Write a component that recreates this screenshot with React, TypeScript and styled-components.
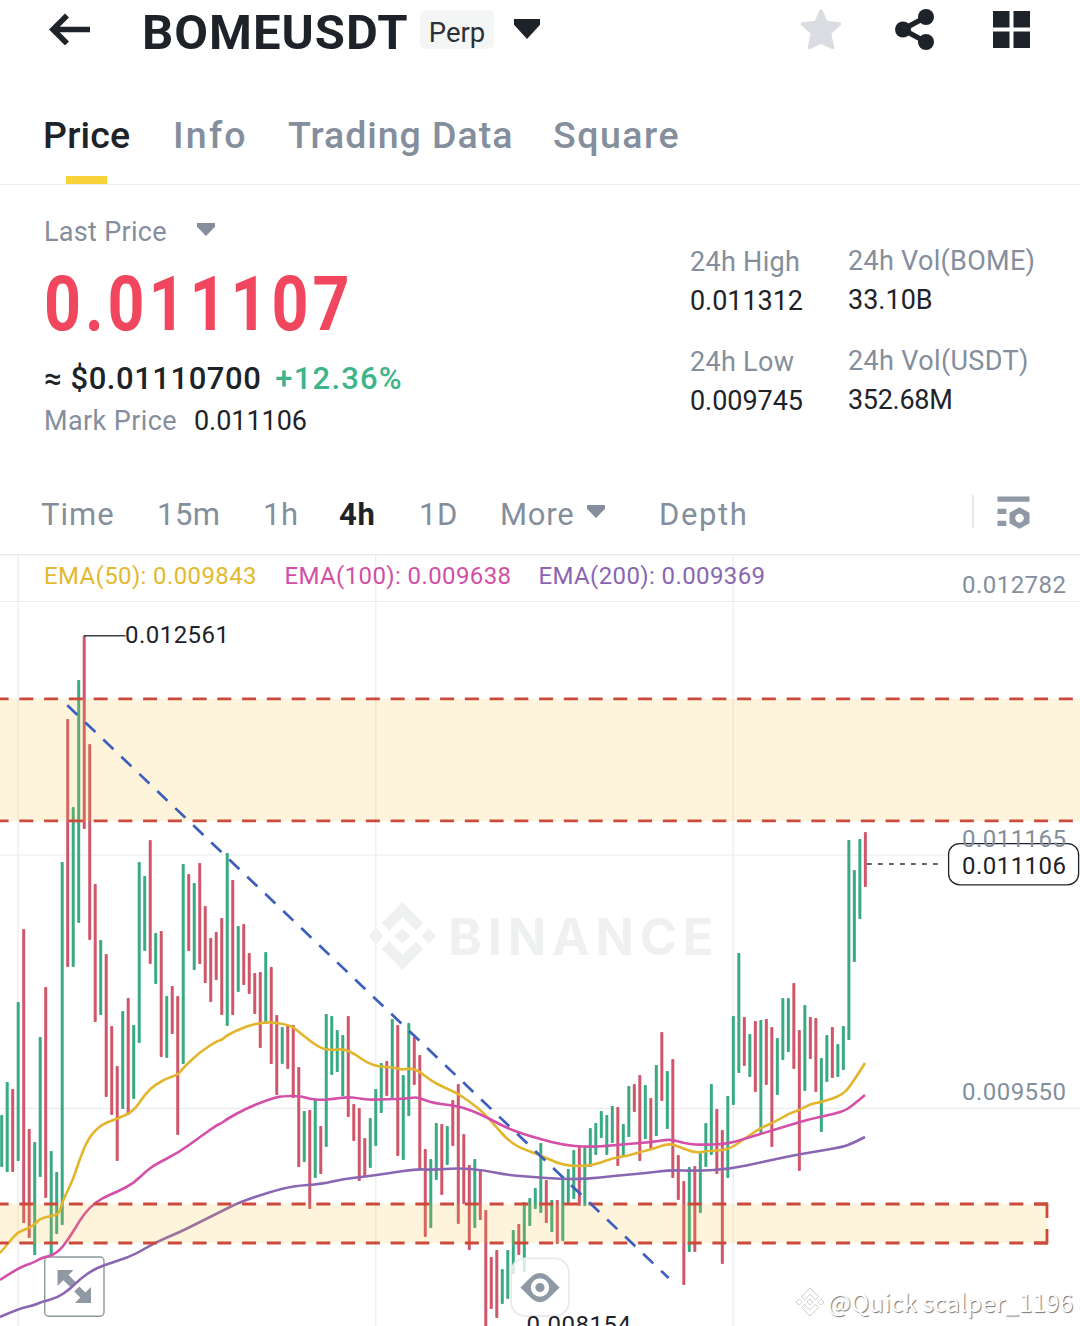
import React from "react";
import styled, { createGlobalStyle, css } from "styled-components";

const ink = "#1e2329";
const muted = "#848e9c";
const up = "#3aaa82";
const down = "#d0566a";

const GlobalStyle = createGlobalStyle`
  * { box-sizing: border-box; }
  body { margin: 0; background: #fff; overflow: hidden; }
`;

const Screen = styled.main`
  position: relative;
  display: flex;
  flex-direction: column;
  width: 1080px;
  height: 1326px;
  overflow: hidden;
  background: #fff;
  color: ${ink};
  font-family: Roboto, "Liberation Sans", sans-serif;
  white-space: nowrap;
`;

/* ---------- header ---------- */

const Header = styled.header`
  display: flex;
  align-items: flex-start;
  height: 64px;
  padding: 0 49px;
`;

const BackIcon = styled.svg`
  display: block;
  width: 42px;
  height: 32px;
  margin: 13px 51px 0 0;
`;

const Title = styled.h1`
  margin: 0;
  width: 278px;
  font-size: 49px;
  font-weight: 700;
  line-height: 65px;
  letter-spacing: 1px;
`;

const Badge = styled.span`
  width: 74px;
  height: 39px;
  margin-top: 10px;
  padding-top: 6px;
  border-radius: 6px;
  background: #f4f5f5;
  color: #2b3139;
  font-size: 27.5px;
  line-height: 33px;
  text-align: center;
`;

const Caret = styled.svg<{ $left: number; $top?: number }>`
  display: block;
  margin-left: ${(p) => p.$left}px;
  margin-top: ${(p) => p.$top ?? 0}px;
`;

const Actions = styled.div`
  display: grid;
  grid-template-columns: 94px 98px 39px;
  margin: 8px 0 0 auto;
`;

/* ---------- tabs ---------- */

const Tabs = styled.nav`
  display: grid;
  grid-template-columns: 130px 115px 265px 200px;
  height: 121px;
  padding: 48px 0 0 43px;
  border-bottom: 1px solid #e9ebed;
`;

const Tab = styled.div<{ $active?: boolean; $spacing: number }>`
  display: flex;
  flex-direction: column;
  align-items: center;
  justify-content: space-between;
  justify-self: start;
  font-size: 37.5px;
  font-weight: 500;
  line-height: 46px;
  letter-spacing: ${(p) => p.$spacing}px;
  color: ${(p) => (p.$active ? ink : muted)};
  &::after {
    content: "";
    width: 41px;
    height: 8px;
    background: ${(p) => (p.$active ? "#f8d33a" : "transparent")};
  }
`;

/* ---------- summary ---------- */

const Summary = styled.section`
  display: flex;
  height: 289px;
  padding: 29px 0 0 44px;
`;

const Quote = styled.div`
  width: 646px;
`;

const QuoteLine = styled.div<{ $gap?: number }>`
  display: flex;
  align-items: center;
  height: 36px;
  margin-top: ${(p) => p.$gap ?? 0}px;
  line-height: 36px;
`;

const text = css<{ $size: number; $spacing?: number; $color?: string; $weight?: number; $left?: number }>`
  font-size: ${(p) => p.$size}px;
  letter-spacing: ${(p) => p.$spacing ?? 0}px;
  color: ${(p) => p.$color ?? ink};
  font-weight: ${(p) => p.$weight ?? 400};
  margin-left: ${(p) => p.$left ?? 0}px;
`;

const Text = styled.span`
  ${text}
`;

/* condensed figures for the headline price */
const LastPrice = styled.div`
  width: max-content;
  margin-top: 15px;
  color: #f1475e;
  font-size: 76px;
  font-weight: 700;
  line-height: 78px;
  letter-spacing: 4.6px;
  transform: scaleX(0.85);
  transform-origin: left center;
`;

const StatColumn = styled.dl<{ $width: number; $lift?: number }>`
  display: flex;
  flex-direction: column;
  gap: 22px;
  width: ${(p) => p.$width}px;
  margin: ${(p) => 29 - (p.$lift ?? 0)}px 0 0;
`;

const Stat = styled.div`
  line-height: 39px;
`;

const StatLabel = styled.dt<{ $spacing: number }>`
  color: ${muted};
  font-size: 27px;
  letter-spacing: ${(p) => p.$spacing}px;
`;

const StatValue = styled.dd<{ $spacing: number }>`
  margin: 0;
  font-size: 27px;
  letter-spacing: ${(p) => p.$spacing}px;
`;

/* ---------- intervals ---------- */

const Intervals = styled.nav`
  display: grid;
  grid-template-columns: 116px 106px 76px 80px 81px 159px 313px 25px auto;
  align-items: center;
  height: 80px;
  padding: 1px 0 0 41px;
`;

const Interval = styled.span<{ $active?: boolean; $spacing: number }>`
  display: flex;
  align-items: center;
  font-size: 31px;
  line-height: 40px;
  letter-spacing: ${(p) => p.$spacing}px;
  font-weight: ${(p) => (p.$active ? 700 : 400)};
  color: ${(p) => (p.$active ? ink : muted)};
`;

const Divider = styled.i`
  width: 2px;
  height: 33px;
  margin-top: -6px;
  background: #e6e8ea;
`;

const SettingsIcon = styled.svg`
  display: block;
  width: 33px;
  height: 33px;
  margin-top: -5px;
`;

/* ---------- chart ---------- */

const Chart = styled.svg`
  display: block;
  flex: none;
  width: 1080px;
  height: 772px;
  font-family: Roboto, "Liberation Sans", sans-serif;
  font-size: 24px;
`;

const Signature = styled.div`
  position: absolute;
  right: 7px;
  bottom: 6px;
  display: flex;
  align-items: center;
  gap: 4px;
  color: #fff;
  font-family: "Noto Sans CJK SC", sans-serif;
  font-size: 24.3px;
  line-height: 36px;
  letter-spacing: 0.1px;
  text-shadow: 1px 1px 1px rgba(60, 60, 60, 0.7);
  svg {
    filter: drop-shadow(0.8px 0.9px 0.4px rgba(40, 40, 40, 0.95));
  }
`;

type Candle = [string, number, number];

/* colour, high and low of each bar, left to right */
const candles: Candle[] = [
  ["g", 1115, 1167], ["g", 1082, 1172], ["r", 1089, 1172], ["g", 1002, 1161], ["r", 929, 1223],
  ["r", 1129, 1238], ["g", 1142, 1255], ["g", 1037, 1177], ["r", 987, 1198], ["g", 1151, 1255],
  ["g", 1172, 1234], ["g", 862, 1225], ["r", 719, 967], ["g", 807, 967], ["g", 680, 923],
  ["r", 635.5, 829], ["r", 744, 940], ["r", 884, 1022], ["g", 940, 1015], ["r", 954, 1097],
  ["r", 1026, 1115], ["r", 1066, 1161], ["g", 1011, 1109], ["r", 998, 1115], ["g", 1025, 1099],
  ["g", 862, 1043], ["g", 876, 951], ["r", 840, 964], ["g", 933, 984], ["r", 931, 1057],
  ["g", 996, 1058], ["r", 986, 1034], ["r", 996, 1135], ["g", 864, 1064], ["r", 874, 951],
  ["g", 883, 970], ["r", 863, 964], ["r", 906, 983], ["r", 938, 1002], ["r", 932, 980],
  ["r", 918, 1015], ["g", 853, 1026], ["r", 880, 1015], ["g", 926, 992], ["r", 924, 985],
  ["r", 953, 994], ["r", 973, 1014], ["r", 972, 1048], ["g", 952, 1024], ["r", 967, 1064],
  ["r", 1015, 1095], ["g", 1027, 1064], ["r", 1025, 1069], ["r", 1025, 1098], ["r", 1067, 1167],
  ["g", 1111, 1162], ["r", 1110, 1209], ["g", 1099, 1178], ["r", 1126, 1174], ["g", 1014, 1147],
  ["g", 1016, 1075], ["g", 1030, 1072], ["g", 1035, 1096], ["r", 1016, 1117], ["r", 1104, 1141],
  ["r", 1108, 1181], ["r", 1138, 1177], ["g", 1118, 1168], ["g", 1089, 1146], ["g", 1063, 1113],
  ["r", 1061, 1096], ["g", 1019, 1098], ["r", 1025, 1156], ["g", 1075, 1160], ["g", 1023, 1116],
  ["r", 1037, 1085], ["r", 1055, 1169], ["r", 1149, 1237], ["g", 1159, 1228], ["g", 1123, 1180],
  ["r", 1124, 1195], ["g", 1126, 1165], ["r", 1100, 1146], ["r", 1084, 1224], ["r", 1134, 1204],
  ["r", 1165, 1250], ["g", 1159, 1228], ["r", 1169, 1220], ["r", 1210, 1330], ["r", 1257, 1309],
  ["r", 1250, 1318], ["g", 1269, 1304], ["g", 1250, 1299], ["g", 1230, 1274], ["r", 1224, 1255],
  ["g", 1202, 1272], ["g", 1198, 1226], ["g", 1188, 1209], ["g", 1143, 1213], ["r", 1180, 1223],
  ["g", 1200, 1232], ["r", 1200, 1244], ["g", 1176, 1241], ["g", 1169, 1203], ["g", 1150, 1199],
  ["r", 1147, 1206], ["g", 1147, 1206], ["g", 1128, 1167], ["g", 1123, 1155], ["g", 1111, 1138],
  ["g", 1115, 1155], ["g", 1106, 1143], ["r", 1107, 1166], ["g", 1124, 1157], ["g", 1086, 1137],
  ["r", 1084, 1112], ["r", 1075, 1161], ["g", 1085, 1139], ["r", 1098, 1149], ["g", 1065, 1136],
  ["r", 1032, 1101], ["g", 1071, 1129], ["r", 1059, 1178], ["r", 1155, 1200], ["r", 1181, 1285],
  ["g", 1167, 1252], ["r", 1166, 1252], ["g", 1153, 1213], ["g", 1123, 1167], ["g", 1084, 1155],
  ["r", 1109, 1174], ["r", 1130, 1264], ["g", 1096, 1178], ["g", 1016, 1105], ["g", 953, 1073],
  ["r", 1017, 1066], ["g", 1034, 1077], ["r", 1021, 1092], ["g", 1020, 1133], ["r", 1019, 1085],
  ["r", 1027, 1147], ["g", 1038, 1095], ["g", 998, 1060], ["g", 998, 1052], ["r", 983, 1069],
  ["r", 1030, 1171], ["g", 1005, 1091], ["r", 1017, 1059], ["r", 1018, 1092], ["g", 1058, 1132],
  ["g", 1035, 1082], ["r", 1027, 1078], ["g", 1044, 1077], ["g", 1026, 1070], ["g", 840, 1040],
  ["g", 870, 962], ["g", 839, 919], ["r", 832, 887],
];

const ema50 =
  "0,1253 10,1241 18,1232 29,1228 35,1224 41,1218 57,1215 60,1211 63,1200 73,1180 80,1158 89,1137 102,1124 117,1119 134,1111 145,1094 156,1084 170,1077 178,1075 183,1068 200,1052 217,1041 222,1040 227,1035 247,1026 260,1023 270,1022 290,1025 298,1031 310,1041 322,1049 333,1050 344,1049 355,1054 367,1063 380,1067 392,1067 403,1070 410,1068 419,1071 430,1080 443,1087 457,1093 470,1102 483,1112 497,1128 508,1140 520,1148 540,1155 557,1163 570,1166 587,1166 600,1163 613,1158 627,1156 640,1152 653,1149 669,1143 682,1148 696,1153 707,1151 728,1150 743,1140 760,1128 773,1123 790,1113 800,1110 810,1104 822,1102 843,1095 853,1082 865,1063";
const ema100 =
  "0,1280 18,1268 35,1262 41,1258 57,1254 70,1237 80,1220 89,1208 102,1198 117,1192 134,1183 145,1172 156,1164 178,1153 200,1137 217,1125 222,1123 227,1119 247,1108 270,1099 282,1096 300,1096 310,1099 322,1100 333,1099 347,1097 357,1098 370,1100 387,1099 403,1099 416,1097 422,1099 433,1103 457,1106 473,1111 490,1119 505,1127 520,1133 540,1139 563,1145 587,1147 607,1146 627,1144 653,1142 670,1139 683,1143 697,1145 728,1144 747,1138 767,1132 790,1125 810,1119 843,1112 853,1105 865,1095";
const ema200 =
  "0,1317 18,1309 35,1305 41,1302 57,1298 70,1289 80,1279 93,1270 102,1266 117,1261 134,1255 156,1242 178,1233 200,1222 220,1212 240,1202 270,1192 293,1186 322,1184 343,1179 370,1176 390,1173 417,1169 433,1170 457,1168 483,1170 507,1175 533,1177 560,1179 587,1179 613,1176 647,1173 670,1170 697,1171 730,1169 763,1162 790,1156 813,1152 843,1147 853,1143 865,1137";

/* straight samples joined through their midpoints */
const smooth = (data: string) => {
  const pts = data.split(" ").map((p) => p.split(",").map(Number));
  let d = `M${pts[0][0]} ${pts[0][1]}`;
  for (let i = 1; i < pts.length - 1; i++) {
    const mx = (pts[i][0] + pts[i + 1][0]) / 2;
    const my = (pts[i][1] + pts[i + 1][1]) / 2;
    d += `Q${pts[i][0]} ${pts[i][1]} ${mx} ${my}`;
  }
  const last = pts[pts.length - 1];
  return `${d}L${last[0]} ${last[1]}`;
};

const binancePath =
  "M38.73 53.2l24.59-24.58 24.6 24.6 14.3-14.31L63.32 0 24.42 38.9zM0 63.31l14.3-14.31 14.31 14.31L14.3 77.61zM38.73 73.41l24.59 24.59 24.6-24.6 14.31 14.29-38.9 38.91-38.91-38.88zM98 63.31l14.3-14.31 14.31 14.3-14.31 14.32zM77.83 63.3L63.32 48.78 48.81 63.28l14.51 14.5z";

const DownCaret = ({ w, h, color, left, top }: { w: number; h: number; color: string; left: number; top?: number }) => (
  <Caret $left={left} $top={top} width={w} height={h} viewBox="0 0 25 19" preserveAspectRatio="none">
    <path d="M0 0H25V5.5L12.5 19L0 5.5Z" fill={color} />
  </Caret>
);

const ChartText = ({ x, y, w, color, children }: { x: number; y: number; w: number; color: string; children: string }) => (
  <text x={x} y={y} textLength={w} fill={color}>
    {children}
  </text>
);

const PriceChart = () => (
  <Chart viewBox="0 554 1080 772">
    <g stroke="#e9ebed" strokeWidth="1.2">
      <path d="M0 554.6H1080M0 601.5H1080M0 855H1080M0 1108.4H1080M18 554V1326M375.8 554V1326M733.2 554V1326" />
    </g>
    <g fill="#eff1f1">
      <path d={binancePath} transform="translate(368.5 902) scale(0.537)" />
      <text x="448.5" y="954.5" fontFamily="Inter, sans-serif" fontWeight="700" fontSize="50.5" textLength="265">
        BINANCE
      </text>
    </g>

    <rect x="44.7" y="1257" width="59.3" height="59.3" rx="4" fill="#fff" fillOpacity="0.6" stroke="#8d989d" strokeWidth="1.4" />
    <g fill="#8f99a3">
      <path d="M57.5 1270H73.5L68.6 1275L75.6 1282L70.3 1287L63.3 1280.2L57.5 1286Z" />
      <path d="M91 1303H75L80.2 1297.6L74.2 1291.6L79.4 1286.6L85.4 1292.6L91 1287Z" />
    </g>

    {candles.map(([kind, high, low], i) => (
      <rect key={i} x={0.2 + i * 5.501} y={high} width="3" height={low - high} rx="0.8" fill={kind === "g" ? up : down} />
    ))}

    <g fill="none" strokeWidth="2.6" strokeLinejoin="round">
      <path d={smooth(ema200)} stroke="#8a66b2" />
      <path d={smooth(ema50)} stroke="#e2b52c" />
      <path d={smooth(ema100)} stroke="#d44fa8" />
    </g>

    <g fill="#f5c02c" fillOpacity="0.17">
      <rect x="0" y="699" width="1080" height="122" />
      <rect x="0" y="1204" width="1047" height="39" />
    </g>
    <g fill="none" stroke="#cb4a3c" strokeWidth="2.8">
      <path d="M-5.4 698.8H1080M-5.4 820.9H1080M-5.4 1204H1048M-5.4 1243H1048" strokeDasharray="14 10.75" />
      <path d="M1034 1204H1047V1218M1034 1243H1047V1229" strokeLinejoin="round" />
    </g>
    <path d="M67.3 705.3L668.6 1278" stroke="#3c5fbd" strokeWidth="2.7" strokeDasharray="14 10.85" />

    <ChartText x={44} y={584} w={212.5} color="#e3b92e">EMA(50): 0.009843</ChartText>
    <ChartText x={284.5} y={584} w={226.5} color="#d14fa6">EMA(100): 0.009638</ChartText>
    <ChartText x={538.5} y={584} w={226.5} color="#8a66b2">EMA(200): 0.009369</ChartText>

    <path d="M84 635.8H125.5" stroke="#3a4246" strokeWidth="1.5" />
    <ChartText x={125} y={643} w={104} color={ink}>0.012561</ChartText>
    <ChartText x={962} y={593} w={104} color="#848e9c">0.012782</ChartText>
    <ChartText x={962} y={1100} w={104} color="#848e9c">0.009550</ChartText>

    <path d="M867 864H939" stroke="#2b3236" strokeWidth="1.4" strokeDasharray="4.8 6.2" />
    <rect x="948.6" y="843.6" width="130" height="41.2" rx="11" fill="#fff" stroke={ink} strokeWidth="1.3" />
    <ChartText x={962} y={847} w={104} color="#848e9c">0.011165</ChartText>
    <ChartText x={962} y={874} w={104} color={ink}>0.011106</ChartText>

    <rect x="511.2" y="1258.4" width="57.6" height="57.6" rx="14" fill="#fff" fillOpacity="0.78" stroke="#e8eaed" strokeWidth="1.8" />
    <path
      d="M520.4 1287.5L531 1277C536.5 1271.5 543.5 1271.5 549 1277L559.6 1287.5L549 1298C543.5 1303.5 536.5 1303.5 531 1298Z"
      fill="#8f99a3"
    />
    <circle cx="540" cy="1287.5" r="6.9" fill="#8f99a3" stroke="#fff" strokeWidth="4.6" />
    <ChartText x={526.5} y={1333} w={104.5} color={ink}>0.008154</ChartText>
  </Chart>
);

const App = () => (
  <>
    <GlobalStyle />
    <Screen>
      <Header>
        <BackIcon viewBox="0 0 42 32" fill="none" stroke={ink} strokeWidth="5.6">
          <path d="M41 16.5H4M18 2.5L4 16.5L18 30.5" />
        </BackIcon>
        <Title>BOMEUSDT</Title>
        <Badge>Perp</Badge>
        <DownCaret w={26} h={20} color={ink} left={20} top={19} />
        <Actions>
          <svg width="42" height="43" viewBox="0 0 42 43">
            <path
              d="M21 3L26 14.5L39.5 16L29.5 25L32.5 39.5L21 34L9.5 39.5L12.5 25L2.5 16L16 14.5Z"
              fill="#d9dce1"
              stroke="#d9dce1"
              strokeWidth="3.5"
              strokeLinejoin="round"
            />
          </svg>
          <svg width="41" height="43" viewBox="0 0 41 43" fill={ink}>
            <path d="M32 9L9 21.5L32 34" fill="none" stroke={ink} strokeWidth="5.4" />
            <circle cx="9" cy="21.5" r="8" />
            <circle cx="32" cy="9" r="8" />
            <circle cx="32" cy="34" r="8" />
          </svg>
          <svg width="39" height="43" viewBox="0 0 39 43" fill={ink}>
            <path d="M1 3H17.5V19.5H1ZM21.5 3H38V19.5H21.5ZM1 23.5H17.5V40H1ZM21.5 23.5H38V40H21.5Z" />
          </svg>
        </Actions>
      </Header>

      <Tabs>
        <Tab $active $spacing={0.2}>Price</Tab>
        <Tab $spacing={2.2}>Info</Tab>
        <Tab $spacing={0.95}>Trading Data</Tab>
        <Tab $spacing={1.5}>Square</Tab>
      </Tabs>

      <Summary>
        <Quote>
          <QuoteLine>
            <Text $size={27} $color={muted} $spacing={0.3}>Last Price</Text>
            <DownCaret w={18} h={13} color={muted} left={30} top={-6} />
          </QuoteLine>
          <LastPrice>0.011107</LastPrice>
          <QuoteLine $gap={18}>
            <Text $size={31} $weight={500} $spacing={0.55}>≈ $0.01110700</Text>
            <Text $size={31} $weight={500} $color="#3db489" $left={14} $spacing={1.2}>+12.36%</Text>
          </QuoteLine>
          <QuoteLine $gap={6}>
            <Text $size={27} $color={muted} $spacing={0.4}>Mark Price</Text>
            <Text $size={27} $left={17} $spacing={-0.05}>0.011106</Text>
          </QuoteLine>
        </Quote>
        <StatColumn $width={158}>
          <Stat>
            <StatLabel $spacing={0.3}>24h High</StatLabel>
            <StatValue $spacing={-0.05}>0.011312</StatValue>
          </Stat>
          <Stat>
            <StatLabel $spacing={0.3}>24h Low</StatLabel>
            <StatValue $spacing={-0.05}>0.009745</StatValue>
          </Stat>
        </StatColumn>
        <StatColumn $width={220} $lift={1}>
          <Stat>
            <StatLabel $spacing={0.3}>24h Vol(BOME)</StatLabel>
            <StatValue $spacing={0}>33.10B</StatValue>
          </Stat>
          <Stat>
            <StatLabel $spacing={0.35}>24h Vol(USDT)</StatLabel>
            <StatValue $spacing={-0.3}>352.68M</StatValue>
          </Stat>
        </StatColumn>
      </Summary>

      <Intervals>
        <Interval $spacing={1}>Time</Interval>
        <Interval $spacing={0.5}>15m</Interval>
        <Interval $spacing={0.5}>1h</Interval>
        <Interval $active $spacing={0.8}>4h</Interval>
        <Interval $spacing={0.5}>1D</Interval>
        <Interval $spacing={0.8}>
          More
          <DownCaret w={18} h={13} color={muted} left={12} top={-6} />
        </Interval>
        <Interval $spacing={1.6}>Depth</Interval>
        <Divider />
        <SettingsIcon viewBox="0 0 33 33" fill="#8f99a5">
          <path d="M0.5 0.5H32.5V5.8H0.5ZM0.5 12.8H9.3V18H0.5ZM0.5 24.8H9.3V30H0.5Z" />
          <path
            fillRule="evenodd"
            d="M22.5 11.3L32.5 16.8V27.3L22.5 32.8L12.5 27.3V16.8ZM22.5 17.8A4.3 4.3 0 1 0 22.5 26.4A4.3 4.3 0 1 0 22.5 17.8Z"
          />
        </SettingsIcon>
      </Intervals>

      <PriceChart />

      <Signature>
        <svg width="28" height="28" viewBox="0 0 126.6 126.6" fill="#fff">
          <path d={binancePath} />
        </svg>
        @Quick scalper_1196
      </Signature>
    </Screen>
  </>
);

export default App;
